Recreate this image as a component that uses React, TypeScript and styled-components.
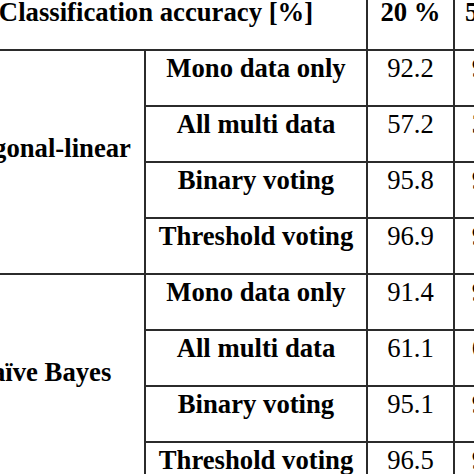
import React from "react";
import styled, { createGlobalStyle } from "styled-components";

const GlobalStyle = createGlobalStyle`
  html, body {
    margin: 0;
    padding: 0;
    background: #ffffff;
    overflow: hidden;
  }
`;

const Page = styled.div`
  width: 474px;
  height: 474px;
  overflow: hidden;
  background: #ffffff;
`;

const Table = styled.div`
  display: grid;
  grid-template-columns: 200px 222px 87px 82px;
  grid-auto-rows: 56px;
  margin-left: -54px;
  margin-top: -5.5px;
  font-family: "Liberation Serif", "Times New Roman", serif;
  font-size: 26.7px;
  line-height: 27px;
  color: #000;
`;

const Cell = styled.div<{ $bold?: boolean; $span?: number }>`
  display: flex;
  align-items: center;
  justify-content: center;
  box-sizing: border-box;
  padding-bottom: 19px;
  border-right: 2px solid #2b2b2b;
  border-bottom: 2px solid #2b2b2b;
  font-weight: ${(p) => (p.$bold ? 700 : 400)};
  white-space: nowrap;
  grid-column: ${(p) => (p.$span ? `span ${p.$span}` : "auto")};
`;

// method name cell, merged over the four rows of its group
const GroupCell = styled(Cell)`
  grid-column: 1;
  grid-row: span 4;
  padding-bottom: 27px;
  padding-right: 6px;
`;

const groups = [
  {
    name: "Diagonal-linear",
    rows: [
      ["Mono data only", "92.2", "92.6"],
      ["All multi data", "57.2", "35.8"],
      ["Binary voting", "95.8", "96.1"],
      ["Threshold voting", "96.9", "97.0"],
    ],
  },
  {
    name: "Naïve Bayes",
    rows: [
      ["Mono data only", "91.4", "91.9"],
      ["All multi data", "61.1", "63.4"],
      ["Binary voting", "95.1", "95.7"],
      ["Threshold voting", "96.5", "96.8"],
    ],
  },
];

export default function App() {
  return (
    <Page>
      <GlobalStyle />
      <Table>
        <Cell $bold $span={2}>Classification accuracy [%]</Cell>
        <Cell $bold>20 %</Cell>
        <Cell $bold>50 %</Cell>
        {groups.map((g) => (
          <React.Fragment key={g.name}>
            <GroupCell $bold>{g.name}</GroupCell>
            {g.rows.map((r) => (
              <React.Fragment key={r[0]}>
                <Cell $bold>{r[0]}</Cell>
                <Cell>{r[1]}</Cell>
                <Cell>{r[2]}</Cell>
              </React.Fragment>
            ))}
          </React.Fragment>
        ))}
      </Table>
    </Page>
  );
}
